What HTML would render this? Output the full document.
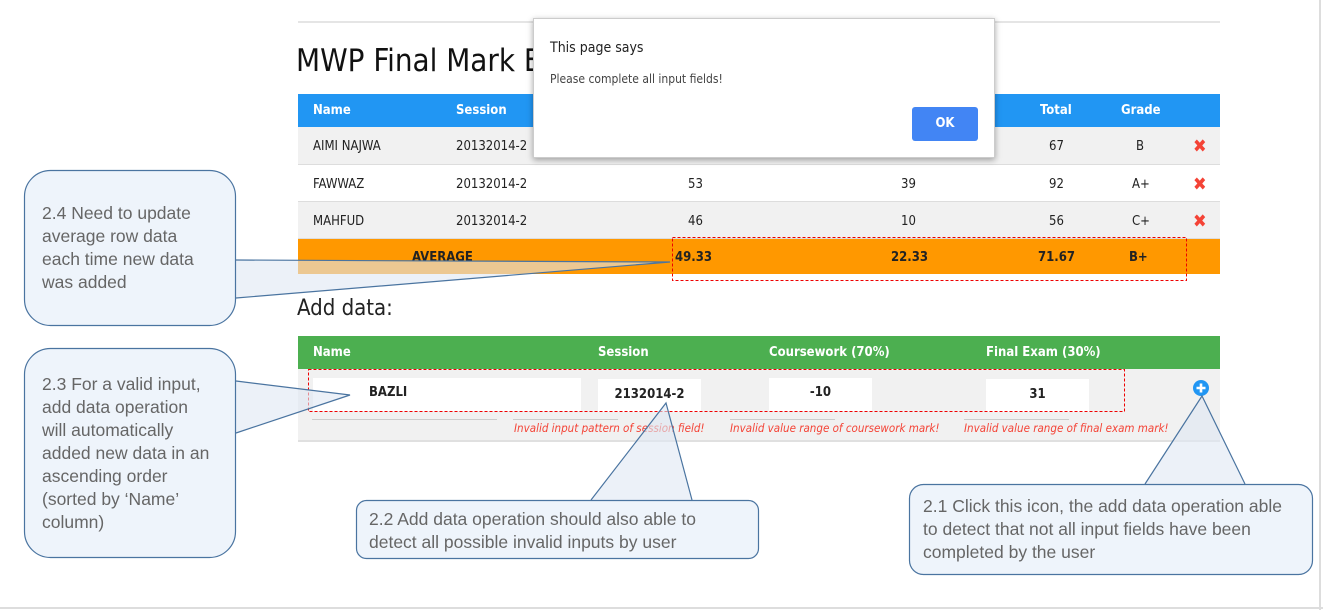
<!DOCTYPE html>
<html><head><meta charset="utf-8"><style>
*{margin:0;padding:0;box-sizing:border-box}
body{width:1323px;height:610px;background:#fff;position:relative;overflow:hidden;font-family:"DejaVu Sans Condensed","Liberation Sans",sans-serif;font-size:13px;color:#222}
.a{position:absolute;white-space:nowrap}
.row{position:absolute;left:298px;width:922px}
.b{font-weight:bold}
.inp{position:absolute;background:#fff;height:33px;text-align:center;line-height:30px;font-weight:bold;font-size:13px}
.err{position:absolute;top:421px;color:#f44336;font-style:italic;font-size:11.5px;white-space:nowrap}
.ul{position:absolute;top:419px;height:1px;background:#ccc}
.x{position:absolute;color:#f44336;font-size:18px;font-weight:bold;left:1193px}
.co{font-family:"Liberation Sans","DejaVu Sans",sans-serif;font-size:17.5px;color:#666;line-height:23px;position:absolute;white-space:nowrap}
</style></head><body>
<div class="a" style="left:298px;top:21px;width:922px;height:2px;background:#e5e5e5"></div>
<div class="a" style="left:1319px;top:0;width:2px;height:610px;background:#ddd"></div>
<div class="a" style="left:0;top:607px;width:1323px;height:2px;background:#ddd"></div>
<div class="a" style="left:296px;top:43px;font-size:31px;font-family:'DejaVu Sans Condensed','Liberation Sans',sans-serif;color:#111">MWP Final Mark Entry</div>

<div class="row" style="top:94px;height:33px;background:#2196f3;color:#fff"></div>
<div class="a b" style="top:103px;left:313px;color:#fff">Name</div>
<div class="a b" style="top:103px;left:456px;color:#fff">Session</div>
<div class="a b" style="top:103px;left:1040px;color:#fff">Total</div>
<div class="a b" style="top:103px;left:1121px;color:#fff">Grade</div>

<div class="row" style="top:127px;height:38px;background:#f1f1f1;border-bottom:1px solid #ddd"></div>
<div class="row" style="top:165px;height:37px;background:#fff;border-bottom:1px solid #ddd"></div>
<div class="row" style="top:202px;height:37px;background:#f1f1f1;border-bottom:1px solid #ddd"></div>
<div class="row" style="top:239px;height:35px;background:#ff9800"></div>

<div class="a" style="top:139px;left:313px">AIMI NAJWA</div><div class="a" style="top:139px;left:456px">20132014-2</div>
<div class="a" style="top:139px;left:1049px">67</div><div class="a" style="top:139px;left:1136px">B</div><div class="x" style="top:136px">✖</div>
<div class="a" style="top:177px;left:313px">FAWWAZ</div><div class="a" style="top:177px;left:456px">20132014-2</div>
<div class="a" style="top:177px;left:688px">53</div><div class="a" style="top:177px;left:901px">39</div>
<div class="a" style="top:177px;left:1049px">92</div><div class="a" style="top:177px;left:1132px">A+</div><div class="x" style="top:174px">✖</div>
<div class="a" style="top:214px;left:313px">MAHFUD</div><div class="a" style="top:214px;left:456px">20132014-2</div>
<div class="a" style="top:214px;left:688px">46</div><div class="a" style="top:214px;left:901px">10</div>
<div class="a" style="top:214px;left:1049px">56</div><div class="a" style="top:214px;left:1132px">C+</div><div class="x" style="top:211px">✖</div>
<div class="a b" style="top:250px;left:412px">AVERAGE</div>
<div class="a b" style="top:250px;left:675px">49.33</div><div class="a b" style="top:250px;left:891px">22.33</div>
<div class="a b" style="top:250px;left:1038px">71.67</div><div class="a b" style="top:250px;left:1129px">B+</div>

<div class="a" style="left:297px;top:296px;font-size:22px">Add data:</div>
<div class="row" style="top:336px;height:33px;background:#4caf50"></div>
<div class="a b" style="top:345px;left:313px;color:#fff">Name</div>
<div class="a b" style="top:345px;left:598px;color:#fff">Session</div>
<div class="a b" style="top:345px;left:769px;color:#fff">Coursework (70%)</div>
<div class="a b" style="top:345px;left:986px;color:#fff">Final Exam (30%)</div>
<div class="row" style="top:369px;height:73px;background:#f1f1f1;border-bottom:2px solid #e0e0e0"></div>
<div class="inp" style="left:313px;top:378px;width:268px;text-align:left;padding-left:56px">BAZLI</div>
<div class="inp" style="left:598px;top:379px;width:103px;line-height:31px">2132014-2</div>
<div class="inp" style="left:769px;top:378px;width:103px">-10</div>
<div class="inp" style="left:986px;top:379px;width:103px;line-height:31px">31</div>
<div class="ul" style="left:312px;width:185px"></div>
<div class="ul" style="left:513px;width:105px"></div>
<div class="ul" style="left:730px;width:105px"></div>
<div class="ul" style="left:964px;width:105px"></div>
<div class="err" style="left:514px">Invalid input pattern of session field!</div>
<div class="err" style="left:730px">Invalid value range of coursework mark!</div>
<div class="err" style="left:964px">Invalid value range of final exam mark!</div>

<svg class="a" style="left:0;top:0" width="1323" height="610">
<circle cx="1201" cy="388" r="8" fill="#2196f3"/>
<path d="M1201 383.5v9M1196.5 388h9" stroke="#fff" stroke-width="2.6"/>
<rect x="672.5" y="237.5" width="514" height="43" fill="none" stroke="#e00" stroke-dasharray="3,2"/>
<rect x="308.5" y="369.5" width="816" height="42" fill="none" stroke="#e00" stroke-dasharray="3,2"/>
<g fill="#dfe8f3" fill-opacity="0.6" stroke="#4a74a0" stroke-width="1.2">
<path d="M236 260 L670 262 L236 298"/>
<path d="M236 381 L350 395 L236 433"/>
<path d="M591 500 L666 403 L692 500"/>
<path d="M1145 484 L1202 396 L1245 484"/>
</g>
<g fill="#eef4fb" stroke="#4a74a0" stroke-width="1.2">
<rect x="24.5" y="170.5" width="211" height="155" rx="26"/>
<rect x="24.5" y="348.5" width="211" height="209" rx="26"/>
<rect x="356.5" y="500.5" width="402" height="58" rx="10"/>
<rect x="909.5" y="484.5" width="403" height="90" rx="14"/>
</g>
</svg>
<div class="co" style="left:42px;top:202px">2.4 Need to update<br>average row data<br>each time new data<br>was added</div>
<div class="co" style="left:42px;top:373px">2.3 For a valid input,<br>add data operation<br>will automatically<br>added new data in an<br>ascending order<br>(sorted by ‘Name’<br>column)</div>
<div class="co" style="left:369px;top:508px">2.2 Add data operation should also able to<br>detect all possible invalid inputs by user</div>
<div class="co" style="left:923px;top:495px">2.1 Click this icon, the add data operation able<br>to detect that not all input fields have been<br>completed by the user</div>

<div class="a" style="left:533px;top:18px;width:462px;height:140px;background:#fff;border:1px solid #ccc;box-shadow:0 2px 6px rgba(0,0,0,.35)"></div>
<div class="a" style="left:550px;top:40px;font-size:14px;color:#222">This page says</div>
<div class="a" style="left:550px;top:72px;font-size:12px;color:#444">Please complete all input fields!</div>
<div class="a b" style="left:912px;top:107px;width:66px;height:34px;background:#4285f4;border-radius:3px;color:#fff;text-align:center;line-height:34px;font-size:13px">OK</div>
</body></html>
